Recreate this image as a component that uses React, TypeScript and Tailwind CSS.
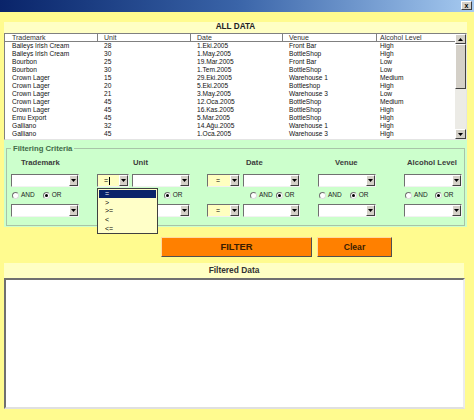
import React from "react";

const rows = [
  ["Baileys Irish Cream", "28", "1.Eki.2005", "Front Bar", "High"],
  ["Baileys Irish Cream", "30", "1.May.2005", "BottleShop", "High"],
  ["Bourbon", "25", "19.Mar.2005", "Front Bar", "Low"],
  ["Bourbon", "30", "1.Tem.2005", "BottleShop", "Low"],
  ["Crown Lager", "15", "29.Eki.2005", "Warehouse 1", "Medium"],
  ["Crown Lager", "20", "5.Eki.2005", "Bottleshop", "High"],
  ["Crown Lager", "21", "3.May.2005", "Warehouse 3", "Low"],
  ["Crown Lager", "45", "12.Oca.2005", "BottleShop", "Medium"],
  ["Crown Lager", "45", "16.Kas.2005", "BottleShop", "High"],
  ["Emu Export", "45", "5.Mar.2005", "BottleShop", "High"],
  ["Galliano", "32", "14.Ağu.2005", "Warehouse 1", "High"],
  ["Galliano", "45", "1.Oca.2005", "Warehouse 3", "High"],
];

// widths + left padding of the grid columns
const cols = [
  { w: "w-[93px] border-r border-[#808080]", cw: "w-[93px]", pl: "pl-[7px]", title: "Trademark" },
  { w: "w-[93px] border-r border-[#808080]", cw: "w-[93px]", pl: "pl-[6px]", title: "Unit" },
  { w: "w-[92px] border-r border-[#808080]", cw: "w-[92px]", pl: "pl-[6px]", title: "Date" },
  { w: "w-[94px] border-r border-[#808080]", cw: "w-[94px]", pl: "pl-[6px]", title: "Venue" },
  { w: "flex-1", cw: "flex-1", pl: "pl-[3px]", title: "Alcohol Level" },
];

const Tri = ({ up = false }: { up?: boolean }) => (
  <svg width="5" height="3" viewBox="0 0 5 3" className={up ? "rotate-180" : ""}>
    <path d="M0 0h5L2.5 3z" fill="#000" />
  </svg>
);

const ArrowBtn = ({ up = false, h = "h-full" }: { up?: boolean; h?: string }) => (
  <div
    className={`w-[9px] ${h} shrink-0 bg-[#d4d0c8] border border-t-white border-l-white border-r-[#404040] border-b-[#404040] flex items-center justify-center`}
  >
    <Tri up={up} />
  </div>
);

const Combo = ({
  w,
  bg = "bg-white",
  children,
}: {
  w: string;
  bg?: string;
  children?: React.ReactNode;
}) => (
  <div
    className={`flex h-[13px] ${w} ${bg} border border-t-[#707070] border-l-[#707070] border-r-[#f2f2f2] border-b-[#f2f2f2]`}
  >
    <div className="flex-1 flex items-center text-[7px] leading-none text-black">{children}</div>
    <ArrowBtn />
  </div>
);

const Radio = ({ label, checked = false }: { label: string; checked?: boolean }) => (
  <div className="flex items-center">
    <span className="w-[7px] h-[7px] rounded-full bg-white border border-t-[#707070] border-l-[#707070] border-r-[#dcdcdc] border-b-[#dcdcdc] flex items-center justify-center">
      {checked && <span className="w-[3px] h-[3px] rounded-full bg-black" />}
    </span>
    <span className="ml-[2px] text-[6.5px] leading-none text-[#222]">{label}</span>
  </div>
);

const RadioRow = ({ pad, gap }: { pad: string; gap: string }) => (
  <div className={`flex items-center h-[11px] mt-[3px] ${pad} ${gap}`}>
    <Radio label="AND" />
    <Radio label="OR" checked />
  </div>
);

const Header = ({ text, pad }: { text: string; pad: string }) => (
  <div className={`h-[8px] mt-[6px] ${pad} text-[7.7px] leading-[8px] font-bold text-[#3c3c3c] whitespace-nowrap`}>
    {text}
  </div>
);

// open drop-down of the Unit operator box
const OpList = () => (
  <div className="absolute left-0 top-[14px] w-[61px] h-[46px] bg-[#ffffc8] border border-[#404040] pt-[1px] px-[1px] z-10 text-[7px] text-black">
    <div className="h-[7.5px] mb-[1px] bg-[#0a246a] text-white pl-[6px] leading-[7.5px]">=</div>
    <div className="h-[8.7px] pl-[6px] leading-[8.7px] mt-[1px]">&gt;</div>
    <div className="h-[8.7px] pl-[6px] leading-[8.7px]">&gt;=</div>
    <div className="h-[8.7px] pl-[6px] leading-[8.7px]">&lt;</div>
    <div className="h-[8.7px] pl-[6px] leading-[8.7px]">&lt;=</div>
  </div>
);

export default function App() {
  return (
    <div className="w-[474px] h-[420px] bg-[#fffb8f] flex flex-col overflow-hidden font-['Liberation_Sans',Arial,sans-serif]">
      {/* title bar */}
      <div className="h-[12px] shrink-0 bg-linear-to-r from-[#0a246a] via-[#3a64a8] to-[#a6caf0] flex justify-end pr-[2px] pt-[1px]">
        <div className="w-[11px] h-[9px] bg-[#d4d0c8] border border-t-white border-l-white border-r-[#404040] border-b-[#404040] flex items-center justify-center text-[7px] font-bold leading-none text-black">
          x
        </div>
      </div>

      <div className="px-[4px] flex flex-col">
        {/* ALL DATA */}
        <div className="mt-[10px] h-[11px] w-[463px] bg-[#ffffc4] flex items-center justify-center text-[8.2px] font-bold text-[#222]">
          ALL DATA
        </div>

        {/* data grid */}
        <div className="h-[107px] w-[463px] bg-white flex border border-t-[#808080] border-l-[#808080] border-r-[#e4e4e4] border-b-[#e4e4e4]">
          <div className="flex-1 flex flex-col">
            <div className="h-[8px] flex border-b border-[#808080]">
              {cols.map((c) => (
                <div
                  key={c.title}
                  className={`${c.w} ${c.pl} h-full text-[7px] leading-[7px] text-[#333] whitespace-nowrap`}
                >
                  {c.title}
                </div>
              ))}
            </div>
            {rows.map((r, i) => (
              <div key={i} className="h-[8px] flex text-[6.6px] leading-[8px] text-[#111]">
                {r.map((v, j) => (
                  <div key={j} className={`${cols[j].pl} ${cols[j].cw} whitespace-nowrap`}>
                    {v}
                  </div>
                ))}
              </div>
            ))}
          </div>
          {/* scrollbar */}
          <div className="w-[11px] flex flex-col bg-[#ecebe6]">
            <ArrowBtn up h="h-[10px] w-[11px]" />
            <div className="h-[45px] bg-[#d4d0c8] border border-t-white border-l-white border-r-[#404040] border-b-[#404040]" />
            <div className="flex-1" />
            <ArrowBtn h="h-[10px] w-[11px]" />
          </div>
        </div>

        {/* filtering criteria */}
        <div className="h-[87px] w-[463px] bg-[#ccffcc] pt-[4px] px-[2px]">
          <fieldset className="h-[82px] border border-[#a8c4a8]">
            <legend className="ml-[4px] px-[2px] text-[7.7px] leading-[9px] font-bold text-[#3f6b48]">
              Filtering Criteria
            </legend>
            <div className="flex items-start pl-[4px]">
              {/* Trademark */}
              <div className="w-[68px] flex flex-col">
                <Header text="Trademark" pad="pl-[10px]" />
                <div className="mt-[7px]">
                  <Combo w="w-[68px]" />
                </div>
                <RadioRow pad="pl-[1px]" gap="gap-[8px]" />
                <div className="mt-[3px]">
                  <Combo w="w-[68px]" />
                </div>
              </div>

              {/* Unit */}
              <div className="ml-[18px] w-[93px] flex flex-col">
                <Header text="Unit" pad="pl-[36px]" />
                <div className="mt-[7px] flex gap-[3px]">
                  <div className="relative">
                    <Combo w="w-[32px]" bg="bg-[#ffffc0]">
                      <span className="pl-[6px]">=</span>
                      <span className="ml-[1px] w-px h-[8px] bg-black" />
                    </Combo>
                    <OpList />
                  </div>
                  <Combo w="w-[58px]" />
                </div>
                <RadioRow pad="pl-[36px]" gap="gap-[8px]" />
                <div className="mt-[3px] flex gap-[3px]">
                  <Combo w="w-[32px]" bg="bg-[#ffffc0]" />
                  <Combo w="w-[58px]" />
                </div>
              </div>

              {/* Date */}
              <div className="ml-[17px] w-[93px] flex flex-col">
                <Header text="Date" pad="pl-[39px]" />
                <div className="mt-[7px] flex gap-[3px]">
                  <Combo w="w-[33px]" bg="bg-[#ffffc0]">
                    <span className="pl-[8px]">=</span>
                  </Combo>
                  <Combo w="w-[57px]" />
                </div>
                <RadioRow pad="pl-[43px]" gap="gap-[3px]" />
                <div className="mt-[3px] flex gap-[3px]">
                  <Combo w="w-[33px]" bg="bg-[#ffffc0]">
                    <span className="pl-[8px]">=</span>
                  </Combo>
                  <Combo w="w-[57px]" />
                </div>
              </div>

              {/* Venue */}
              <div className="ml-[18px] w-[58px] flex flex-col">
                <Header text="Venue" pad="pl-[17px]" />
                <div className="mt-[7px]">
                  <Combo w="w-[58px]" />
                </div>
                <RadioRow pad="pl-[1px]" gap="gap-[8px]" />
                <div className="mt-[3px]">
                  <Combo w="w-[58px]" />
                </div>
              </div>

              {/* Alcohol Level */}
              <div className="ml-[28px] w-[58px] flex flex-col">
                <Header text="Alcohol Level" pad="pl-[3px]" />
                <div className="mt-[7px]">
                  <Combo w="w-[58px]" />
                </div>
                <RadioRow pad="pl-[1px]" gap="gap-[7px]" />
                <div className="mt-[3px]">
                  <Combo w="w-[58px]" />
                </div>
              </div>
            </div>
          </fieldset>
        </div>

        {/* buttons */}
        <div className="flex mt-[10px] ml-[157px] gap-[5px]">
          <button
            type="button"
            className="w-[151px] h-[20px] bg-[#ff8000] border border-t-[#ffd9a0] border-l-[#ffd9a0] border-r-[#505050] border-b-[#505050] text-[9.4px] font-bold text-[#3a1c00]"
          >
            FILTER
          </button>
          <button
            type="button"
            className="w-[75px] h-[20px] bg-[#ff8000] border border-t-[#ffd9a0] border-l-[#ffd9a0] border-r-[#505050] border-b-[#505050] text-[8.6px] font-bold text-[#3a1c00]"
          >
            Clear
          </button>
        </div>

        {/* filtered data */}
        <div className="mt-[6px] h-[15px] w-[460px] bg-[#ffffc4] flex items-center justify-center text-[8.4px] font-bold text-[#333]">
          Filtered Data
        </div>
        <div className="h-[131px] w-[461px] bg-white border-2 border-t-[#707070] border-l-[#707070] border-r-[#ececec] border-b-[#e0e0e0]" />
      </div>
    </div>
  );
}
